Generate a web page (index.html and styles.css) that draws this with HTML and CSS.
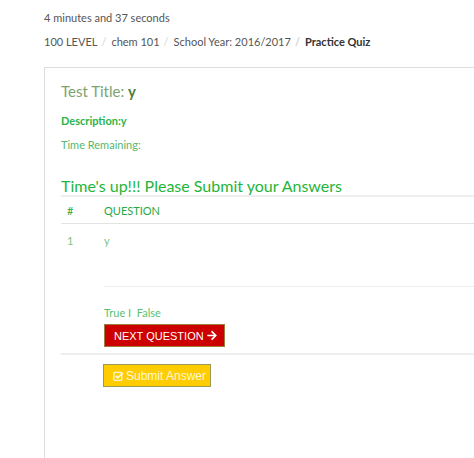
FILE: index.html
```html
<!DOCTYPE html>
<html>
<head>
<meta charset="utf-8">
<link rel="stylesheet" href="styles.css">
</head>
<body>
<div class="page">
  <div class="timer">4 minutes and 37 seconds</div>
  <ol class="breadcrumb">
    <li>100 LEVEL</li>
    <li>chem 101</li>
    <li>School Year: 2016/2017</li>
    <li class="active">Practice Quiz</li>
  </ol>
  <div class="card">
    <h3 class="test-title">Test Title: <b>y</b></h3>
    <p class="desc">Description:y</p>
    <p class="remaining">Time Remaining:</p>
    <h4 class="timesup">Time's up!!! Please Submit your Answers</h4>
    <table class="qtable">
      <thead>
        <tr><th class="num">#</th><th>QUESTION</th></tr>
      </thead>
      <tbody>
        <tr>
          <td class="num">1</td>
          <td class="qcell">
            <div class="qtext">y</div>
            <hr class="qrule">
            <div class="options">True I &nbsp;False</div>
            <button class="btn btn-next"><span>NEXT QUESTION</span><svg class="arrow" viewBox="0 0 448 512" width="10" height="11"><path fill="#fff" d="M190.5 66.9l22.2-22.2c9.4-9.4 24.6-9.4 33.9 0L441 239c9.4 9.4 9.4 24.6 0 33.9L246.6 467.3c-9.4 9.4-24.6 9.4-33.9 0l-22.2-22.2c-9.5-9.5-9.3-25 .4-34.3L311.4 296H24c-13.3 0-24-10.7-24-24v-32c0-13.3 10.700-24 24-24h287.4L190.9 101.2c-9.8-9.3-10-24.8-.4-34.3z"/></svg></button>
          </td>
        </tr>
      </tbody>
    </table>
    <div class="submit-row">
      <button class="btn btn-submit"><svg class="check" viewBox="0 0 16 15" width="11" height="10"><rect x="1" y="2" width="12" height="12" rx="1.5" fill="none" stroke="#fff8d8" stroke-width="2"/><path d="M3.8 7.3l3 3 7.5-7.5" fill="none" stroke="#fff8d8" stroke-width="2.4"/></svg><span>Submit Answer</span></button>
    </div>
  </div>
</div>
</body>
</html>
```

FILE: styles.css
```css
html, body {
  margin: 0;
  padding: 0;
  overflow: hidden;
  background: #fff;
}
body {
  font-family: Lato, "Open Sans", sans-serif;
  font-size: 11px;
  color: #555;
}
.page {
  padding: 11px 0 0 44px;
}
.timer {
  line-height: 13px;
  color: #555;
}
.breadcrumb {
  list-style: none;
  margin: 11px 0 0 0;
  padding: 0;
  display: flex;
  line-height: 13px;
  color: #555;
}
.breadcrumb li + li::before {
  content: "/";
  color: #d4d4d4;
  padding: 0 5px 0 4px;
}
.breadcrumb .active {
  font-weight: bold;
  color: #333;
}
.card {
  margin-top: 19px;
  border: 1px solid #ddd;
  border-right: 0;
  border-bottom: 0;
  box-sizing: border-box;
  height: 391px;
  padding: 14px 0 0 16px;
}
.test-title {
  margin: 0;
  font-size: 15px;
  font-weight: normal;
  line-height: 19px;
  color: #7ca370;
}
.test-title b {
  color: #4f7f3f;
}
.desc {
  margin: 13px 0 0;
  font-size: 11px;
  font-weight: bold;
  line-height: 13px;
  color: #2cb34a;
}
.remaining {
  margin: 11px 0 0;
  font-size: 11px;
  line-height: 13px;
  color: #56b86a;
}
.timesup {
  margin: 25px 0 0;
  font-size: 16px;
  font-weight: normal;
  line-height: 19px;
  color: #1fb53a;
}
.qtable {
  width: 100%;
  border-collapse: collapse;
  border-top: 2px solid #eee;
}
.qtable th {
  text-align: left;
  font-weight: normal;
  font-size: 11px;
  color: #2aa845;
  height: 26px;
  padding: 0;
  border-bottom: 1px solid #e3e3e3;
}
.qtable .num {
  width: 43px;
  padding-left: 6px;
  box-sizing: border-box;
}
.qtable td {
  vertical-align: top;
  padding: 0;
  color: #7cc487;
  border-bottom: 2px solid #eee;
}
.qtable td.num {
  padding-top: 10px;
}
.qcell {
  padding-top: 10px !important;
  padding-bottom: 6px !important;
}
.qtext {
  line-height: 13px;
}
.qrule {
  border: 0;
  border-top: 1px solid #eee;
  margin: 39px 0 0 0;
}
.options {
  margin-top: 19px;
  font-size: 11px;
  line-height: 13px;
  color: #5cbf6e;
}
.btn {
  font-family: "Liberation Sans", Arial, sans-serif;
  color: #fff;
  border-radius: 0;
  cursor: pointer;
  display: inline-flex;
  align-items: center;
  white-space: nowrap;
  box-sizing: border-box;
  height: 23px;
}
.btn svg {
  flex-shrink: 0;
}
.btn-next {
  margin-top: 5px;
  font-size: 11px;
  background: #cc0000;
  border: 1px solid #9e7d3e;
  padding: 0 9px;
  width: 121px;
}
.btn-next .arrow {
  margin-left: 3px;
}
.submit-row {
  padding: 9px 0 0 42px;
}
.btn-submit {
  font-size: 12px;
  background: #ffcc00;
  border: 1px solid #9a9a55;
  padding: 0 9px;
  width: 108px;
  color: #fff8d8;
}
.btn-submit .check {
  margin-right: 2px;
}
```
